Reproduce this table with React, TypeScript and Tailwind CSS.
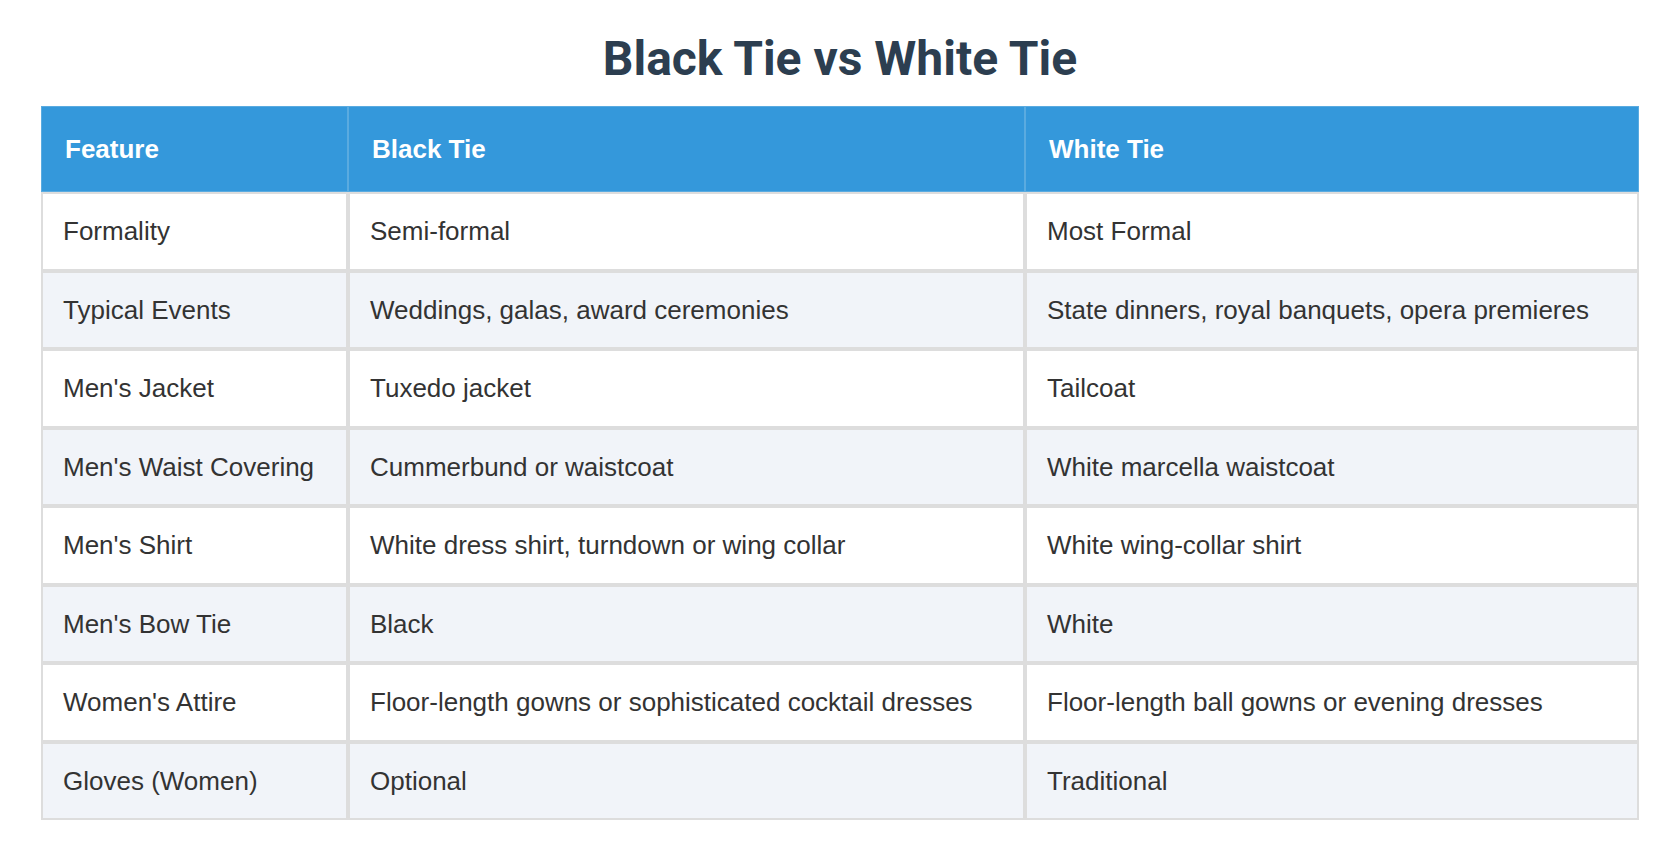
import React from "react";

type Row = {
  feature: string;
  black: string;
  white: string;
};

const rows: Row[] = [
  { feature: "Formality", black: "Semi-formal", white: "Most Formal" },
  {
    feature: "Typical Events",
    black: "Weddings, galas, award ceremonies",
    white: "State dinners, royal banquets, opera premieres",
  },
  { feature: "Men's Jacket", black: "Tuxedo jacket", white: "Tailcoat" },
  {
    feature: "Men's Waist Covering",
    black: "Cummerbund or waistcoat",
    white: "White marcella waistcoat",
  },
  {
    feature: "Men's Shirt",
    black: "White dress shirt, turndown or wing collar",
    white: "White wing-collar shirt",
  },
  { feature: "Men's Bow Tie", black: "Black", white: "White" },
  {
    feature: "Women's Attire",
    black: "Floor-length gowns or sophisticated cocktail dresses",
    white: "Floor-length ball gowns or evening dresses",
  },
  { feature: "Gloves (Women)", black: "Optional", white: "Traditional" },
];

const thClass =
  "border border-[#5aabe0] bg-[#3498db] px-[23px] py-[27px] text-left font-bold leading-[30px] text-white";
const tdClass =
  "border-2 border-[#dddddd] px-5 py-[22px] leading-[30.5px] text-[#333333]";

const App: React.FC = () => {
  return (
    <div className="min-h-[862px] bg-white px-[41px] pt-[31px] font-['Liberation_Sans',Arial,sans-serif]">
      {/* Title */}
      <h1 className="mb-[19px] text-center font-['Roboto',sans-serif] text-[48px] font-bold leading-[56px] text-[#2c3e50]">
        Black Tie vs White Tie
      </h1>

      <table className="w-[1598px] table-fixed border-separate border-spacing-0 text-[26px]">
        <thead>
          <tr>
            <th className={`${thClass} w-[307px]`}>Feature</th>
            <th className={`${thClass} w-[677px]`}>Black Tie</th>
            <th className={`${thClass} w-[614px]`}>White Tie</th>
          </tr>
        </thead>
        <tbody>
          {rows.map((r, i) => (
            <tr key={r.feature} className={i % 2 === 1 ? "bg-[#f1f4f9]" : "bg-white"}>
              <td className={tdClass}>{r.feature}</td>
              <td className={tdClass}>{r.black}</td>
              <td className={tdClass}>{r.white}</td>
            </tr>
          ))}
        </tbody>
      </table>
    </div>
  );
};

export default App;
